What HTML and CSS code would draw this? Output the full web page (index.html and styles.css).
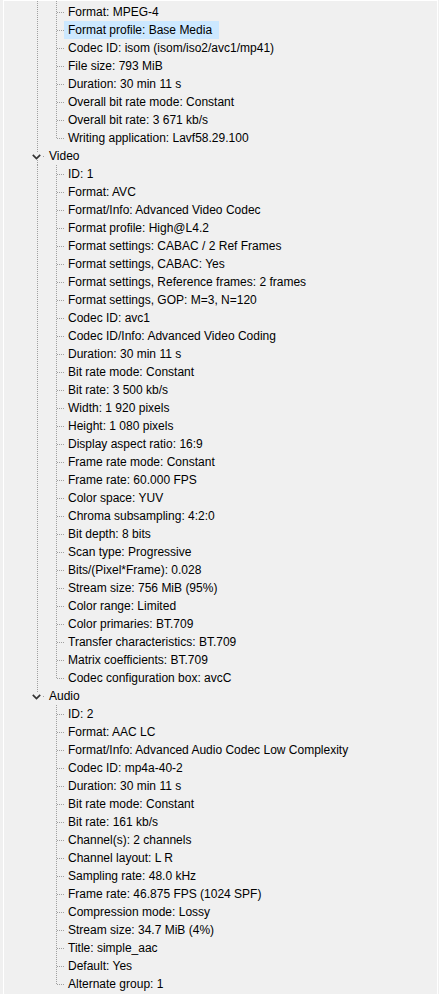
FILE: index.html
```html
<!DOCTYPE html>
<html lang="en">
<head>
    <meta charset="UTF-8">
    <meta name="viewport" content="width=device-width, initial-scale=1.0">
    <title>MediaInfo - Tree</title>
    <link rel="stylesheet" href="styles.css">
</head>
<body>
    <div class="tree">
        <!-- General (header scrolled out of view) -->
        <div class="group">
            <div class="items">
                <div class="item stub"><span class="branch"></span></div>
                <div class="item"><span class="branch"></span><span class="label">Format: MPEG-4</span></div>
                <div class="item"><span class="branch"></span><span class="label selected">Format profile: Base Media</span></div>
                <div class="item"><span class="branch"></span><span class="label">Codec ID: isom (isom/iso2/avc1/mp41)</span></div>
                <div class="item"><span class="branch"></span><span class="label">File size: 793 MiB</span></div>
                <div class="item"><span class="branch"></span><span class="label">Duration: 30 min 11 s</span></div>
                <div class="item"><span class="branch"></span><span class="label">Overall bit rate mode: Constant</span></div>
                <div class="item"><span class="branch"></span><span class="label">Overall bit rate: 3 671 kb/s</span></div>
                <div class="item"><span class="branch"></span><span class="label">Writing application: Lavf58.29.100</span></div>
            </div>
        </div>

        <div class="group">
            <div class="head">
                <span class="toggle">
                    <svg width="9" height="6" viewBox="0 0 9 6"><polyline points="0.8,0.8 4.5,4.5 8.2,0.8" /></svg>
                </span>
                <span class="label">Video</span>
            </div>
            <div class="items">
                <div class="item"><span class="branch"></span><span class="label">ID: 1</span></div>
                <div class="item"><span class="branch"></span><span class="label">Format: AVC</span></div>
                <div class="item"><span class="branch"></span><span class="label">Format/Info: Advanced Video Codec</span></div>
                <div class="item"><span class="branch"></span><span class="label">Format profile: High@L4.2</span></div>
                <div class="item"><span class="branch"></span><span class="label">Format settings: CABAC / 2 Ref Frames</span></div>
                <div class="item"><span class="branch"></span><span class="label">Format settings, CABAC: Yes</span></div>
                <div class="item"><span class="branch"></span><span class="label">Format settings, Reference frames: 2 frames</span></div>
                <div class="item"><span class="branch"></span><span class="label">Format settings, GOP: M=3, N=120</span></div>
                <div class="item"><span class="branch"></span><span class="label">Codec ID: avc1</span></div>
                <div class="item"><span class="branch"></span><span class="label">Codec ID/Info: Advanced Video Coding</span></div>
                <div class="item"><span class="branch"></span><span class="label">Duration: 30 min 11 s</span></div>
                <div class="item"><span class="branch"></span><span class="label">Bit rate mode: Constant</span></div>
                <div class="item"><span class="branch"></span><span class="label">Bit rate: 3 500 kb/s</span></div>
                <div class="item"><span class="branch"></span><span class="label">Width: 1 920 pixels</span></div>
                <div class="item"><span class="branch"></span><span class="label">Height: 1 080 pixels</span></div>
                <div class="item"><span class="branch"></span><span class="label">Display aspect ratio: 16:9</span></div>
                <div class="item"><span class="branch"></span><span class="label">Frame rate mode: Constant</span></div>
                <div class="item"><span class="branch"></span><span class="label">Frame rate: 60.000 FPS</span></div>
                <div class="item"><span class="branch"></span><span class="label">Color space: YUV</span></div>
                <div class="item"><span class="branch"></span><span class="label">Chroma subsampling: 4:2:0</span></div>
                <div class="item"><span class="branch"></span><span class="label">Bit depth: 8 bits</span></div>
                <div class="item"><span class="branch"></span><span class="label">Scan type: Progressive</span></div>
                <div class="item"><span class="branch"></span><span class="label">Bits/(Pixel*Frame): 0.028</span></div>
                <div class="item"><span class="branch"></span><span class="label">Stream size: 756 MiB (95%)</span></div>
                <div class="item"><span class="branch"></span><span class="label">Color range: Limited</span></div>
                <div class="item"><span class="branch"></span><span class="label">Color primaries: BT.709</span></div>
                <div class="item"><span class="branch"></span><span class="label">Transfer characteristics: BT.709</span></div>
                <div class="item"><span class="branch"></span><span class="label">Matrix coefficients: BT.709</span></div>
                <div class="item"><span class="branch"></span><span class="label">Codec configuration box: avcC</span></div>
            </div>
        </div>

        <div class="group">
            <div class="head">
                <span class="toggle">
                    <svg width="9" height="6" viewBox="0 0 9 6"><polyline points="0.8,0.8 4.5,4.5 8.2,0.8" /></svg>
                </span>
                <span class="label">Audio</span>
            </div>
            <div class="items">
                <div class="item"><span class="branch"></span><span class="label">ID: 2</span></div>
                <div class="item"><span class="branch"></span><span class="label">Format: AAC LC</span></div>
                <div class="item"><span class="branch"></span><span class="label">Format/Info: Advanced Audio Codec Low Complexity</span></div>
                <div class="item"><span class="branch"></span><span class="label">Codec ID: mp4a-40-2</span></div>
                <div class="item"><span class="branch"></span><span class="label">Duration: 30 min 11 s</span></div>
                <div class="item"><span class="branch"></span><span class="label">Bit rate mode: Constant</span></div>
                <div class="item"><span class="branch"></span><span class="label">Bit rate: 161 kb/s</span></div>
                <div class="item"><span class="branch"></span><span class="label">Channel(s): 2 channels</span></div>
                <div class="item"><span class="branch"></span><span class="label">Channel layout: L R</span></div>
                <div class="item"><span class="branch"></span><span class="label">Sampling rate: 48.0 kHz</span></div>
                <div class="item"><span class="branch"></span><span class="label">Frame rate: 46.875 FPS (1024 SPF)</span></div>
                <div class="item"><span class="branch"></span><span class="label">Compression mode: Lossy</span></div>
                <div class="item"><span class="branch"></span><span class="label">Stream size: 34.7 MiB (4%)</span></div>
                <div class="item"><span class="branch"></span><span class="label">Title: simple_aac</span></div>
                <div class="item"><span class="branch"></span><span class="label">Default: Yes</span></div>
                <div class="item"><span class="branch"></span><span class="label">Alternate group: 1</span></div>
            </div>
        </div>
    </div>
</body>
</html>
```

FILE: styles.css
```css
* {
    margin: 0;
    padding: 0;
    box-sizing: border-box;
}

body {
    background: #f0f0f0;
    font-family: 'Liberation Sans', Arial, sans-serif;
    font-size: 12px;
    color: #000;
    height: 100vh;
    overflow: hidden;
}

/* sunken tree view box */
.tree {
    margin-left: 3px;
    margin-right: 1px;
    height: 100%;
    border-left: 1px solid #fff;
    border-top: 1px solid #fff;
    border-right: 1px solid #fff;
    padding-left: 24px;
    background: #f0f0f0;
}

/* dotted guide lines */
.group:not(:last-child) > .items {
    background-image: repeating-linear-gradient(to bottom, #a0a0a0 0 1px, transparent 1px 2px);
    background-size: 1px 100%;
    background-position: 9px 0;
    background-repeat: no-repeat;
}

.items {
    padding-left: 19px;
}

.head,
.item {
    display: flex;
    height: 18px;
    line-height: 18px;
    white-space: nowrap;
}

.item.stub {
    height: 2px;
}

.toggle {
    width: 17px;
    flex-shrink: 0;
    display: flex;
    align-items: center;
    padding-left: 4px;
    padding-top: 1px;
    background-image:
        repeating-linear-gradient(to bottom, #a0a0a0 0 1px, transparent 1px 2px),
        repeating-linear-gradient(to bottom, #a0a0a0 0 1px, transparent 1px 2px),
        repeating-linear-gradient(to right, #a0a0a0 0 1px, transparent 1px 2px);
    background-size: 1px 6px, 1px 6px, 1px 1px;
    background-position: 9px 0, 9px 13px, 15px 9px;
    background-repeat: no-repeat;
}

.group:last-child .toggle {
    background-size: 1px 6px, 0 0, 1px 1px;
}

.toggle svg {
    display: block;
}

.toggle polyline {
    fill: none;
    stroke: #333;
    stroke-width: 1.7;
}

.branch {
    width: 17px;
    flex-shrink: 0;
    background-image:
        repeating-linear-gradient(to bottom, #a0a0a0 0 1px, transparent 1px 2px),
        repeating-linear-gradient(to right, #a0a0a0 0 1px, transparent 1px 2px);
    background-size: 1px 100%, 7px 1px;
    background-position: 9px 0, 10px 9px;
    background-repeat: no-repeat;
}

.item:last-child .branch {
    background-size: 1px 10px, 7px 1px;
}

.item.stub .branch {
    background-size: 1px 100%, 0 0;
}

.label {
    padding: 0 4px;
}

.label.selected {
    background: #cce8ff;
    padding-right: 7px;
}
```
